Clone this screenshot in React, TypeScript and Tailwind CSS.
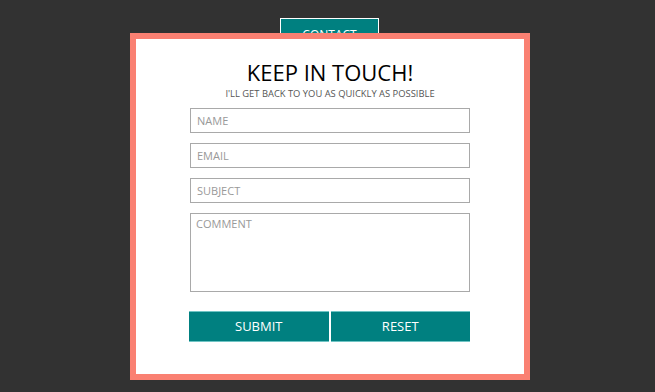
import React from 'react';

const font = { fontFamily: '"Open Sans", "Liberation Sans", sans-serif' };

export default function App() {
  return (
    <div className="relative w-[655px] h-[392px] bg-[#323232] overflow-hidden" style={font}>
      {/* Bouton contact */}
      <div className="flex justify-center pt-[18px] pl-[4px]">
        <button className="w-[99px] h-[30px] bg-[#008080] border border-white text-white text-[12px] pt-[4px] leading-none">
          CONTACT
        </button>
      </div>

      {/* Modal */}
      <div className="absolute left-[130px] top-[33px] w-[400px] h-[347px] border-[6px] border-[#fa8072] bg-white">
        <div className="flex flex-col items-center pt-[22px]">
          <h1 className="text-[22px] leading-[22px] text-black font-normal">KEEP IN TOUCH!</h1>
          <p className="text-[9.4px] leading-[10px] text-[#555] mt-[6px]">I'LL GET BACK TO YOU AS QUICKLY AS POSSIBLE</p>

          <form className="w-[280px] mt-[9px] flex flex-col gap-[10px]">
            {['NAME', 'EMAIL', 'SUBJECT'].map(p => (
              <input key={p} placeholder={p}
                className="w-full h-[25px] border border-[#a9a9a9] px-[6px] text-[11px] placeholder:text-[#999] outline-none" />
            ))}
            <textarea placeholder="COMMENT"
              className="w-full h-[79px] border border-[#a9a9a9] px-[5px] pt-[2px] text-[11px] placeholder:text-[#999] outline-none resize-none" />
            <div className="flex gap-[2px] mt-[9px] ml-[-1px]">
              <button type="button" className="w-[140px] h-[31px] bg-[#008080] border-y border-[#6fc4c4] text-white text-[13px]">SUBMIT</button>
              <button type="button" className="w-[140px] h-[31px] bg-[#008080] border-y border-[#6fc4c4] text-white text-[13px]">RESET</button>
            </div>
          </form>
        </div>
      </div>
    </div>
  );
}
